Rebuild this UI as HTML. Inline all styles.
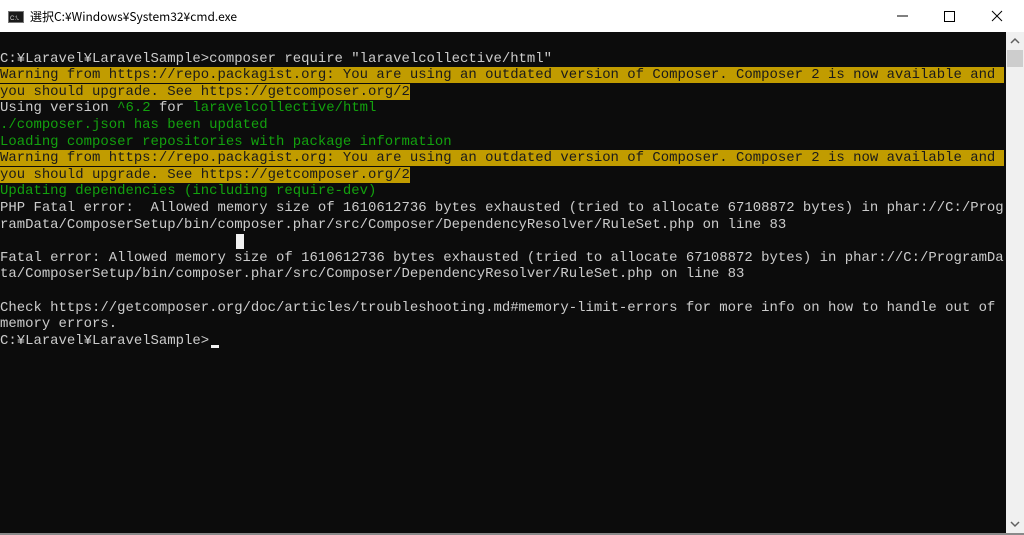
<!DOCTYPE html>
<html><head><meta charset="utf-8"><style>
*{margin:0;padding:0;box-sizing:border-box}
body{width:1024px;height:535px;overflow:hidden;background:#fff;position:relative;font-family:"Liberation Sans","Noto Sans CJK JP",sans-serif}
#title{position:absolute;left:0;top:0;width:1024px;height:32px;background:#fff}
#title .t{position:absolute;left:30px;top:8px;font-size:12px;color:#000;font-family:"Noto Sans CJK JP","Liberation Sans",sans-serif}
#term{position:absolute;left:0;top:32px;width:1006px;height:501px;background:#0c0c0c;overflow:hidden}
#sb{position:absolute;left:1006px;top:32px;width:18px;height:501px;background:#f0f0f0}
#bot{position:absolute;left:0;top:533px;width:1024px;height:2px;background:#8a8a8a}
.l{position:absolute;left:0;white-space:pre;font-family:"Liberation Mono",monospace;font-size:13.95px;line-height:16.6px;height:16.6px;color:#cccccc;margin-top:2px}
.y{background:#c19c00;color:#1a1a1a}
.g{color:#13a10e}
</style></head><body>
<div id="title">
<svg style="position:absolute;left:8px;top:11px" width="16" height="12"><rect x="0" y="0" width="16" height="12" fill="#1a1a1a"/><rect x="0.5" y="0.5" width="15" height="11" fill="none" stroke="#777"/><text x="2" y="9" font-size="6" fill="#ddd" font-family="Liberation Sans">C:\.</text></svg>
<div class="t">選択C:¥Windows¥System32¥cmd.exe</div>
<svg style="position:absolute;left:897px;top:8px" width="120" height="16">
<line x1="0" y1="8" x2="11" y2="8" stroke="#000" stroke-width="1"/>
<rect x="47.5" y="3.5" width="10" height="10" fill="none" stroke="#000"/>
<line x1="95" y1="3" x2="105" y2="13" stroke="#000"/><line x1="105" y1="3" x2="95" y2="13" stroke="#000"/>
</svg>
</div>
<div id="term">
<div class="l" style="top:16.6px">C:¥Laravel¥LaravelSample&gt;composer require "laravelcollective/html"</div>
<div class="l" style="top:33.2px"><span class="y">Warning from https://repo.packagist.org: You are using an outdated version of Composer. Composer 2 is now available and </span></div>
<div class="l" style="top:49.8px"><span class="y">you should upgrade. See https://getcomposer.org/2</span></div>
<div class="l" style="top:66.4px">Using version <span class="g">^6.2</span> for <span class="g">laravelcollective/html</span></div>
<div class="l g" style="top:83px">./composer.json has been updated</div>
<div class="l g" style="top:99.6px">Loading composer repositories with package information</div>
<div class="l" style="top:116.2px"><span class="y">Warning from https://repo.packagist.org: You are using an outdated version of Composer. Composer 2 is now available and </span></div>
<div class="l" style="top:132.8px"><span class="y">you should upgrade. See https://getcomposer.org/2</span></div>
<div class="l g" style="top:149.4px">Updating dependencies (including require-dev)</div>
<div class="l" style="top:166px">PHP Fatal error:  Allowed memory size of 1610612736 bytes exhausted (tried to allocate 67108872 bytes) in phar://C:/Prog</div>
<div class="l" style="top:182.6px">ramData/ComposerSetup/bin/composer.phar/src/Composer/DependencyResolver/RuleSet.php on line 83</div>
<div style="position:absolute;left:236px;top:202px;width:8px;height:15px;background:#f2f2f2"></div>
<div class="l" style="top:215.8px">Fatal error: Allowed memory size of 1610612736 bytes exhausted (tried to allocate 67108872 bytes) in phar://C:/ProgramDa</div>
<div class="l" style="top:232.4px">ta/ComposerSetup/bin/composer.phar/src/Composer/DependencyResolver/RuleSet.php on line 83</div>
<div class="l" style="top:265.6px">Check https://getcomposer.org/doc/articles/troubleshooting.md#memory-limit-errors for more info on how to handle out of</div>
<div class="l" style="top:282.2px">memory errors.</div>
<div class="l" style="top:298.8px">C:¥Laravel¥LaravelSample&gt;</div>
<div style="position:absolute;left:211px;top:313px;width:8px;height:3px;background:#f2f2f2"></div>
</div>
<div id="sb">
<svg style="position:absolute;left:4px;top:5px" width="10" height="8"><polyline points="1,6 5,2 9,6" fill="none" stroke="#606060" stroke-width="1.5"/></svg>
<div style="position:absolute;left:1px;top:18px;width:16px;height:17px;background:#cdcdcd"></div>
<svg style="position:absolute;left:4px;top:488px" width="10" height="8"><polyline points="1,2 5,6 9,2" fill="none" stroke="#606060" stroke-width="1.5"/></svg>
</div>
<div id="bot"></div>
</body></html>
